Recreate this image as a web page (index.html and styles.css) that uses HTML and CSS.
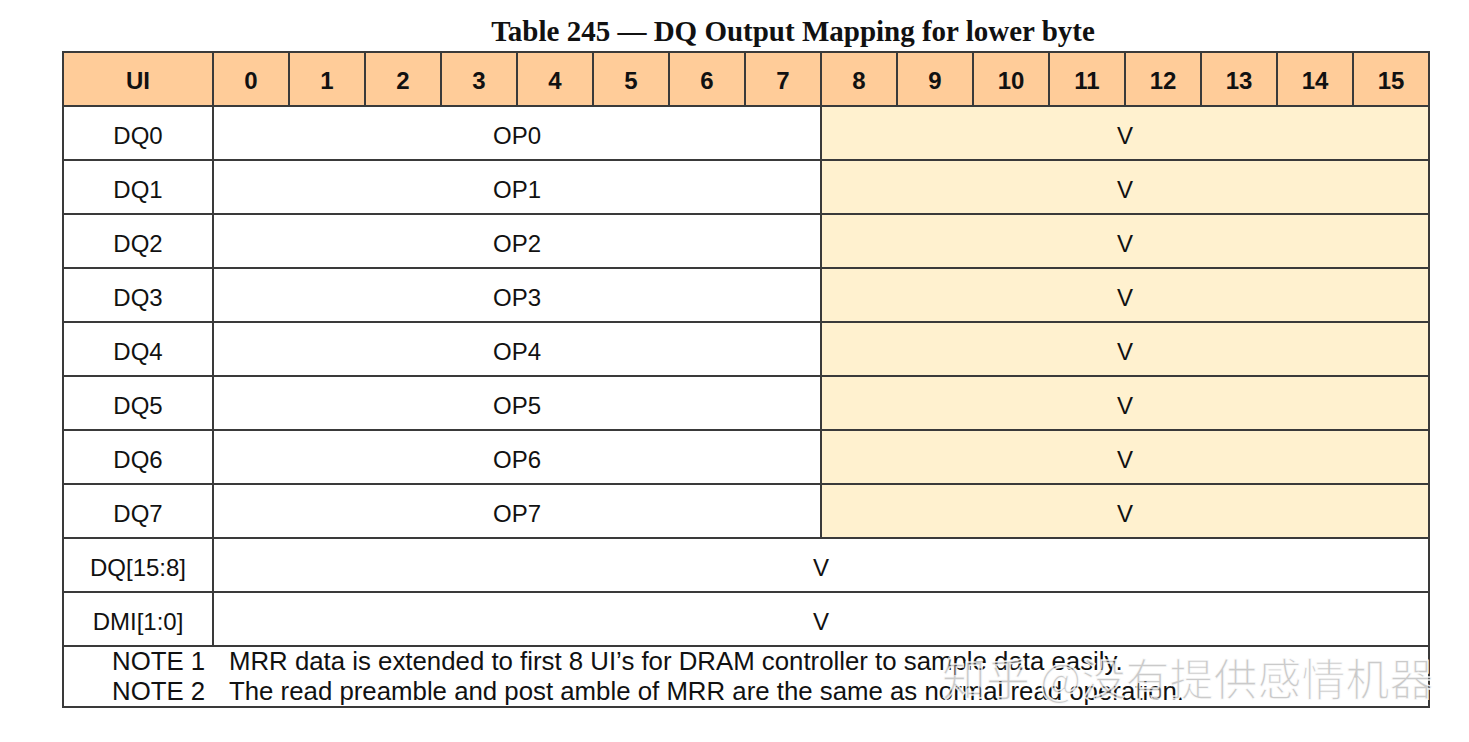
FILE: index.html
```html
<!DOCTYPE html>
<html>
<head>
<meta charset="utf-8">
<link rel="stylesheet" href="styles.css">
</head>
<body>
<div class="page">
  <h1 class="title">Table 245 — DQ Output Mapping for lower byte</h1>
  <div class="table-wrap">
    <table class="map">
      <colgroup>
        <col class="c-label">
        <col><col><col><col><col><col><col><col>
        <col><col><col><col><col><col><col><col>
      </colgroup>
      <thead>
        <tr class="hdr">
          <th>UI</th><th>0</th><th>1</th><th>2</th><th>3</th><th>4</th><th>5</th><th>6</th><th>7</th>
          <th>8</th><th>9</th><th>10</th><th>11</th><th>12</th><th>13</th><th>14</th><th>15</th>
        </tr>
      </thead>
      <tbody>
        <tr><td>DQ0</td><td colspan="8">OP0</td><td colspan="8" class="cream">V</td></tr>
        <tr><td>DQ1</td><td colspan="8">OP1</td><td colspan="8" class="cream">V</td></tr>
        <tr><td>DQ2</td><td colspan="8">OP2</td><td colspan="8" class="cream">V</td></tr>
        <tr><td>DQ3</td><td colspan="8">OP3</td><td colspan="8" class="cream">V</td></tr>
        <tr><td>DQ4</td><td colspan="8">OP4</td><td colspan="8" class="cream">V</td></tr>
        <tr><td>DQ5</td><td colspan="8">OP5</td><td colspan="8" class="cream">V</td></tr>
        <tr><td>DQ6</td><td colspan="8">OP6</td><td colspan="8" class="cream">V</td></tr>
        <tr><td>DQ7</td><td colspan="8">OP7</td><td colspan="8" class="cream">V</td></tr>
        <tr><td>DQ[15:8]</td><td colspan="16">V</td></tr>
        <tr><td>DMI[1:0]</td><td colspan="16">V</td></tr>
        <tr class="notes">
          <td colspan="17">
            <div class="note"><span class="note-tag">NOTE 1</span><span>MRR data is extended to first 8 UI’s for DRAM controller to sample data easily.</span></div>
            <div class="note"><span class="note-tag">NOTE 2</span><span>The read preamble and post amble of MRR are the same as normal read operation.</span></div>
          </td>
        </tr>
      </tbody>
    </table>
    <div class="watermark">知乎 @没有提供感情机器</div>
  </div>
</div>
</body>
</html>
```
FILE: styles.css
```css
html, body {
  margin: 0;
  padding: 0;
  background: #ffffff;
}
.page {
  width: 1469px;
  height: 742px;
  padding-top: 14px;
  box-sizing: border-box;
}
.title {
  margin: 0 0 2px 0;
  padding-left: 117px;
  text-align: center;
  font-family: "Liberation Serif", "Times New Roman", serif;
  font-weight: bold;
  font-size: 29px;
  line-height: 35px;
  color: #111;
}
.table-wrap {
  position: relative;
  margin-left: 62px;
  width: 1368px;
}
.map {
  border-collapse: collapse;
  table-layout: fixed;
  width: 1368px;
  font-family: "Liberation Sans", Arial, sans-serif;
  font-size: 24px;
  color: #111;
}
.map col { width: 76px; }
.map col.c-label { width: 150px; }
.map th, .map td {
  border: 2px solid #3a3a3a;
  height: 52px;
  padding: 0;
  text-align: center;
  vertical-align: middle;
}
.map td {
  padding-top: 5px;
  height: 47px;
}
.hdr th {
  background: #ffcc99;
  font-weight: bold;
  padding-top: 3px;
  height: 49px;
}
.cream {
  background: #fff1cf;
}
.map .notes td {
  text-align: left;
  height: auto;
  padding: 0 0 0 48px;
  font-size: 25.8px;
  line-height: 29.5px;
}
.note {
  display: flex;
}
.note-tag {
  width: 117px;
  flex: none;
}
.watermark {
  position: absolute;
  left: 880px;
  top: 599px;
  font-family: "Noto Sans CJK SC", sans-serif;
  font-size: 44px;
  line-height: 54px;
  color: rgba(150, 150, 150, 0.5);
  -webkit-text-stroke: 1.5px rgba(255, 255, 255, 0.85);
  white-space: nowrap;
  pointer-events: none;
}
```
